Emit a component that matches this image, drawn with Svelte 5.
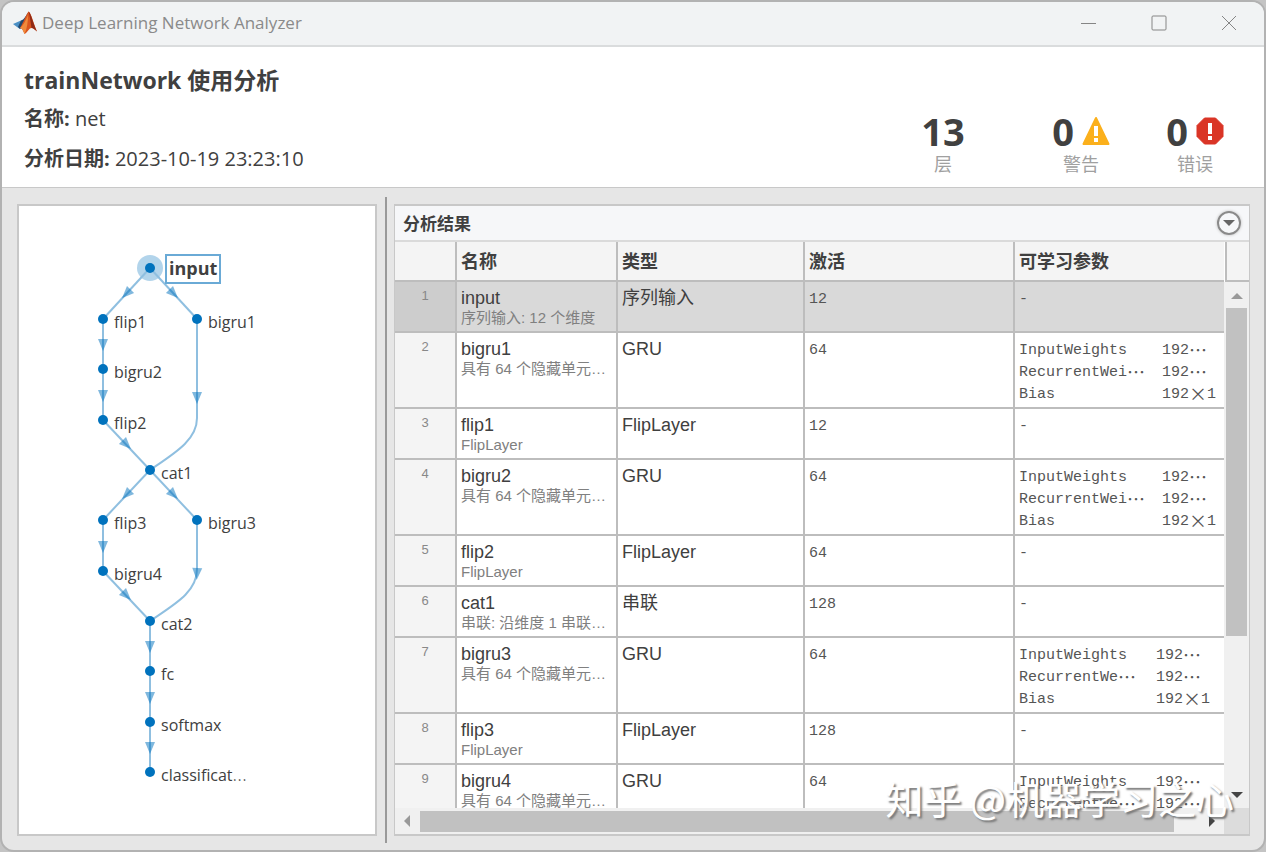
<script>
  let selected = $state(1);

  const wide = [
    { name: 'InputWeights', size: '192', cutSize: true },
    { name: 'RecurrentWei', cut: true, size: '192', cutSize: true },
    { name: 'Bias', size: '192' }
  ];

  const narrow = [
    { name: 'InputWeights', size: '192', cutSize: true },
    { name: 'RecurrentWe', cut: true, size: '192', cutSize: true },
    { name: 'Bias', size: '192' }
  ];

  const layers = [
    { id: 1, name: 'input', detail: '序列输入: 12 个维度', type: '序列输入', activations: 12 },
    { id: 2, name: 'bigru1', detail: '具有 64 个隐藏单元…', type: 'GRU', activations: 64, params: wide },
    { id: 3, name: 'flip1', detail: 'FlipLayer', type: 'FlipLayer', activations: 12 },
    { id: 4, name: 'bigru2', detail: '具有 64 个隐藏单元…', type: 'GRU', activations: 64, params: wide },
    { id: 5, name: 'flip2', detail: 'FlipLayer', type: 'FlipLayer', activations: 64 },
    { id: 6, name: 'cat1', detail: '串联: 沿维度 1 串联…', type: '串联', activations: 128 },
    { id: 7, name: 'bigru3', detail: '具有 64 个隐藏单元…', type: 'GRU', activations: 64, params: narrow, tight: true },
    { id: 8, name: 'flip3', detail: 'FlipLayer', type: 'FlipLayer', activations: 128 },
    { id: 9, name: 'bigru4', detail: '具有 64 个隐藏单元…', type: 'GRU', activations: 64, params: narrow, tight: true }
  ];

  const nodes = [
    { label: 'flip1', x: 84, y: 113 },
    { label: 'bigru1', x: 178, y: 113 },
    { label: 'bigru2', x: 84, y: 163 },
    { label: 'flip2', x: 84, y: 214 },
    { label: 'cat1', x: 131, y: 264 },
    { label: 'flip3', x: 84, y: 314 },
    { label: 'bigru3', x: 178, y: 314 },
    { label: 'bigru4', x: 84, y: 365 },
    { label: 'cat2', x: 131, y: 415 },
    { label: 'fc', x: 131, y: 465 },
    { label: 'softmax', x: 131, y: 516 },
    { label: 'classificat', x: 131, y: 566, cut: true }
  ];

  // x, y and angle place the arrow head on the edge
  const edges = [
    { d: 'M131 62L84 113', x: 108, y: 87, angle: 45 },
    { d: 'M131 62L178 113', x: 154, y: 87, angle: -45 },
    { d: 'M84 113V163', x: 84, y: 138, angle: 0 },
    { d: 'M84 163V214', x: 84, y: 189, angle: 0 },
    { d: 'M84 214L131 264', x: 107, y: 238, angle: -45 },
    { d: 'M178 113V212C178 234 156 247 131 264', x: 178, y: 191, angle: 0 },
    { d: 'M131 264L84 314', x: 108, y: 288, angle: 45 },
    { d: 'M131 264L178 314', x: 154, y: 288, angle: -45 },
    { d: 'M84 314V365', x: 84, y: 340, angle: 0 },
    { d: 'M84 365L131 415', x: 107, y: 389, angle: -45 },
    { d: 'M178 314V363C178 386 156 398 131 415', x: 178, y: 367, angle: 3 },
    { d: 'M131 415V465', x: 131, y: 440, angle: 0 },
    { d: 'M131 465V516', x: 131, y: 491, angle: 0 },
    { d: 'M131 516V566', x: 131, y: 541, angle: 0 }
  ];
</script>

<div class="window">
  <div class="titlebar">
    <svg class="logo" width="24" height="24" viewBox="0 0 24 24" aria-hidden="true">
      <path d="M0 13L8 9.500L12 13L7 18L4 16Z" fill="#4a8fc4" />
      <path d="M8 9.500C11 9 13 4 15.500 1L12 13L7 18L5 16Z" fill="#23486e" />
      <path d="M15.500 0.500C12.500 5 11 10 7 17C9 17 10 19 11.500 23C14 22 16 17 18.500 17C20.500 17 22 19 24 20.500C21 14 18 1 15.500 0.500Z" fill="#d9541e" />
      <path d="M15.500 0.500C18 2 20.500 14 24 20.500C22 19 20.500 17 18.500 17C17.500 11 17 5 15.500 0.500Z" fill="#8f2a17" />
      <path d="M7 17C10 15 13 9 15 4C15 11 14 18 11.500 23C10 19 9 17 7 17Z" fill="#f08a3c" />
    </svg>
    <span class="caption">Deep Learning Network Analyzer</span>
    <div class="controls">
      <button aria-label="Minimize"><svg width="16" height="16" viewBox="0 0 16 16"><path d="M0 8.500H15" /></svg></button>
      <button aria-label="Maximize"><svg width="16" height="16" viewBox="0 0 16 16"><rect x="1" y="1" width="14" height="14" rx="1" /></svg></button>
      <button aria-label="Close"><svg width="16" height="16" viewBox="0 0 16 16"><path d="M1 1L15 15M15 1L1 15" /></svg></button>
    </div>
  </div>

  <header>
    <div class="info">
      <h1>trainNetwork 使用分析</h1>
      <p><b>名称:</b> net</p>
      <p><b>分析日期:</b> 2023-10-19 23:23:10</p>
    </div>
    <div class="stats">
      <div class="stat total">
        <div class="value">13</div>
        <div class="unit">层</div>
      </div>
      <div class="stat">
        <div class="value">
          0
          <svg width="28" height="30" viewBox="0 0 28 30" aria-hidden="true">
            <path d="M14 2L26.500 28H1.500Z" fill="#fbb01c" stroke="#fbb01c" stroke-width="2" stroke-linejoin="round" />
            <path d="M12 10H16V20H12ZM12 22H16V26H12Z" fill="#fff" />
          </svg>
        </div>
        <div class="unit">警告</div>
      </div>
      <div class="stat">
        <div class="value">
          0
          <svg width="28" height="28" viewBox="0 0 28 28" aria-hidden="true">
            <path d="M8.500 1H19.500L27 8.500V19.500L19.500 27H8.500L1 19.500V8.500Z" fill="#da3526" stroke="#da3526" stroke-linejoin="round" />
            <path d="M12 6H16V17H12ZM12 19H16V23H12Z" fill="#fff" />
          </svg>
        </div>
        <div class="unit">错误</div>
      </div>
    </div>
  </header>

  <main>
    <section class="graph">
      <svg width="356" height="600" viewBox="0 0 356 600">
        <circle class="halo" cx="131" cy="62" r="13" />
        {#each edges as edge}
          <path class="edge" d={edge.d} />
          <path class="arrow" d="M-5 -5H5L0 7Z" transform="translate({edge.x} {edge.y}) rotate({edge.angle})" />
        {/each}
        <rect class="tag" x="147" y="49" width="54" height="28" />
        <circle class="node" cx="131" cy="62" r="5" />
        <text class="current" x="150" y="69">input</text>
        {#each nodes as node}
          <circle class="node" cx={node.x} cy={node.y} r="5" />
          <text x={node.x + 11} y={node.y + 9}>{node.label}{#if node.cut}<tspan class="dots">⋯</tspan>{/if}</text>
        {/each}
      </svg>
    </section>

    <div class="splitter"></div>

    <section class="results">
      <div class="results-title">
        <h2>分析结果</h2>
        <button class="menu" aria-label="菜单">
          <svg width="24" height="24" viewBox="0 0 24 24">
            <circle cx="12" cy="12" r="11" fill="none" stroke="#8a8a8a" stroke-width="2" />
            <path d="M6 9H18L12 15Z" fill="#666" />
          </svg>
        </button>
      </div>

      <div class="grid">
        <div class="viewport">
          <table>
            <colgroup>
              <col class="c-index" />
              <col class="c-name" />
              <col class="c-type" />
              <col class="c-act" />
              <col />
            </colgroup>
            <thead>
              <tr>
                <th></th>
                <th>名称</th>
                <th>类型</th>
                <th>激活</th>
                <th>可学习参数</th>
              </tr>
            </thead>
            <tbody>
              {#each layers as layer}
                <tr class:selected={layer.id === selected} onclick={() => (selected = layer.id)}>
                  <td class="index">{layer.id}</td>
                  <td>
                    <div>{layer.name}</div>
                    <div class="detail">{layer.detail}</div>
                  </td>
                  <td>{layer.type}</td>
                  <td class="mono">{layer.activations}</td>
                  <td class="mono">
                    {#if layer.params}
                      <div class="params" class:tight={layer.tight}>
                        {#each layer.params as p}
                          <span>{p.name}{#if p.cut}<i>⋯</i>{/if}</span>
                          <span>{p.size}{#if p.cutSize}<i>⋯</i>{:else}<i>×</i>1{/if}</span>
                        {/each}
                      </div>
                    {:else}
                      -
                    {/if}
                  </td>
                </tr>
              {/each}
            </tbody>
          </table>
        </div>
        <div class="vside">
          <div class="stub"></div>
          <div class="vbar">
            <svg width="12" height="6" viewBox="0 0 12 6"><path d="M0 6L6 0L12 6Z" fill="#999" /></svg>
            <div class="vthumb"></div>
            <svg class="end" width="12" height="6" viewBox="0 0 12 6"><path d="M0 0H12L6 6Z" fill="#444" /></svg>
          </div>
        </div>
        <div class="hbar">
          <svg width="6" height="12" viewBox="0 0 6 12"><path d="M6 0L0 6L6 12Z" fill="#999" /></svg>
          <div class="hthumb"></div>
          <svg class="end" width="6" height="12" viewBox="0 0 6 12"><path d="M0 0L6 6L0 12Z" fill="#444" /></svg>
        </div>
        <div class="corner"></div>
      </div>
    </section>
  </main>
</div>
<div class="watermark">知乎 @机器学习之心</div>

<style>
  :global(body) {
    background: #c4c4c4;
  }

  .window {
    box-sizing: border-box;
    display: flex;
    flex-direction: column;
    height: 100vh;
    border: 2px solid #b2b2b2;
    border-radius: 14px;
    overflow: hidden;
    background: #e6e6e6;
    color: #404040;
    font-family: "Open Sans", "Noto Sans CJK SC", sans-serif;
  }

  button {
    padding: 0;
    border: 0;
    background: none;
  }

  svg {
    display: block;
  }

  .titlebar {
    display: flex;
    align-items: center;
    height: 42px;
    padding: 0 27px 1px 11px;
    border-bottom: 2px solid #dadcdd;
    background: #f1f3f4;
  }

  .caption {
    margin-left: 5px;
    color: #8a8a8a;
    font-size: 17px;
    line-height: 24px;
  }

  .controls {
    display: flex;
    gap: 54px;
    margin-left: auto;
  }

  .controls path,
  .controls rect {
    fill: none;
    stroke: #858585;
  }

  header {
    display: flex;
    justify-content: space-between;
    align-items: flex-end;
    padding: 14px 39px 8px 22px;
    border-bottom: 1px solid #c8c8c8;
    background: #fff;
  }

  h1 {
    margin: 0;
    font-size: 23px;
    line-height: 38px;
  }

  .info p {
    margin: 0;
    font-size: 20px;
    line-height: 40px;
  }

  .stats {
    display: flex;
    gap: 54px;
    padding-bottom: 2px;
  }

  .stat {
    width: 60px;
  }

  .total {
    margin-right: 24px;
  }

  .value {
    display: flex;
    justify-content: center;
    align-items: center;
    gap: 8px;
    font-size: 38px;
    font-weight: bold;
    line-height: 40px;
  }

  .unit {
    color: #a0a0a0;
    font-size: 18px;
    line-height: 26px;
    text-align: center;
  }

  main {
    display: flex;
    flex: 1;
    min-height: 0;
    padding: 9px 14px 7px 15px;
  }

  .graph {
    flex: none;
    margin: 7px 8px 7px 0;
    border: 2px solid #c8c8c8;
    background: #fff;
    overflow: hidden;
  }

  .graph text {
    fill: #404040;
    font-size: 16px;
  }

  .graph .current {
    font-size: 18px;
    font-weight: bold;
  }

  .graph .dots {
    font-family: "Noto Sans CJK SC", sans-serif;
    font-size: 13px;
  }

  .halo {
    fill: #b2d4eb;
  }

  .node {
    fill: #0072bd;
  }

  .edge {
    fill: none;
    stroke: #8fbfe0;
    stroke-width: 2;
  }

  .arrow {
    fill: #0072bd;
    fill-opacity: 0.5;
  }

  .tag {
    fill: #fff;
    stroke: #6aaad6;
    stroke-width: 2;
  }

  .splitter {
    width: 2px;
    background: #999;
  }

  .results {
    display: flex;
    flex: 1;
    flex-direction: column;
    min-width: 0;
    margin: 7px 0 7px 7px;
    border: 1px solid #c8c8c8;
    border-top-width: 2px;
    border-bottom-width: 2px;
    background: #fff;
  }

  .results-title {
    display: flex;
    justify-content: space-between;
    align-items: center;
    height: 34px;
    padding: 0 8px;
    border-bottom: 2px solid #dadada;
    background: #f6f7f9;
  }

  h2 {
    margin: 0;
    padding-top: 2px;
    font-size: 17px;
    line-height: 24px;
  }

  .menu {
    border-radius: 50%;
    box-shadow: 0 0 3px #bbb;
  }

  .grid {
    display: grid;
    flex: 1;
    grid-template-columns: 1fr 25px;
    grid-template-rows: 1fr 26px;
    min-height: 0;
  }

  .viewport {
    min-height: 0;
    overflow: hidden;
  }

  table {
    width: 100%;
    border-collapse: separate;
    border-spacing: 0;
    table-layout: fixed;
    font-family: "Liberation Sans", "Noto Sans CJK SC", sans-serif;
  }

  .c-index {
    width: 62px;
  }

  .c-name {
    width: 161px;
  }

  .c-type {
    width: 187px;
  }

  .c-act {
    width: 210px;
  }

  th {
    height: 36px;
    padding: 2px 0 0 4px;
    border-right: 2px solid #bdbdbd;
    border-bottom: 2px solid #bdbdbd;
    background: #f4f4f4;
    font-size: 18px;
    line-height: 24px;
    text-align: left;
  }

  td {
    box-sizing: border-box;
    height: 51px;
    padding: 5px 0 3px 4px;
    border-right: 2px solid #bdbdbd;
    border-bottom: 2px solid #bdbdbd;
    font-size: 18px;
    line-height: 22px;
    vertical-align: top;
    white-space: nowrap;
  }

  th:last-child,
  td:last-child {
    border-right: 0;
  }

  .index {
    padding-right: 4px;
    background: #f4f4f4;
    color: #888;
    font-size: 13px;
    line-height: 18px;
    text-align: center;
  }

  .detail {
    color: #808080;
    font-size: 15px;
    line-height: 18px;
  }

  .mono {
    padding-top: 7px;
    padding-bottom: 1px;
    font-family: "Liberation Mono", "Noto Sans CJK SC", monospace;
    font-size: 15px;
    color: #555;
  }

  .selected td {
    background: #d9d9d9;
  }

  .selected .index {
    background: #cdcdcd;
  }

  .params {
    display: grid;
    grid-template-columns: 143px 1fr;
    line-height: 22px;
  }

  .params.tight {
    grid-template-columns: 137px 1fr;
  }

  .params i {
    display: inline-block;
    width: 18px;
    font-family: "Noto Sans CJK SC", sans-serif;
    font-size: 18px;
    font-style: normal;
    line-height: 18px;
    text-align: center;
    vertical-align: top;
  }

  .vside {
    display: flex;
    flex-direction: column;
    min-height: 0;
  }

  .stub {
    height: 38px;
    margin-left: 1px;
    border-bottom: 2px solid #bdbdbd;
    border-left: 2px solid #bdbdbd;
    background: #f4f4f4;
  }

  .vbar {
    display: flex;
    flex: 1;
    flex-direction: column;
    align-items: center;
    padding: 11px 0 10px;
    background: #f0f0f0;
  }

  .vthumb {
    width: 21px;
    height: 65%;
    margin-top: 9px;
    background: #c1c1c1;
  }

  .vbar .end {
    margin-top: auto;
  }

  .hbar {
    display: flex;
    align-items: center;
    padding: 0 9px;
    background: #f0f0f0;
  }

  .hthumb {
    width: 93%;
    height: 21px;
    margin-left: 10px;
    background: #c1c1c1;
  }

  .hbar .end {
    margin-left: auto;
  }

  .corner {
    background: #dcdcdc;
  }

  .watermark {
    position: absolute;
    right: 32px;
    bottom: 26px;
    color: #fff;
    font-family: "Noto Sans CJK SC", sans-serif;
    font-size: 38px;
    line-height: 56px;
    text-shadow: 2px 2px 2px #777;
    pointer-events: none;
  }
</style>
